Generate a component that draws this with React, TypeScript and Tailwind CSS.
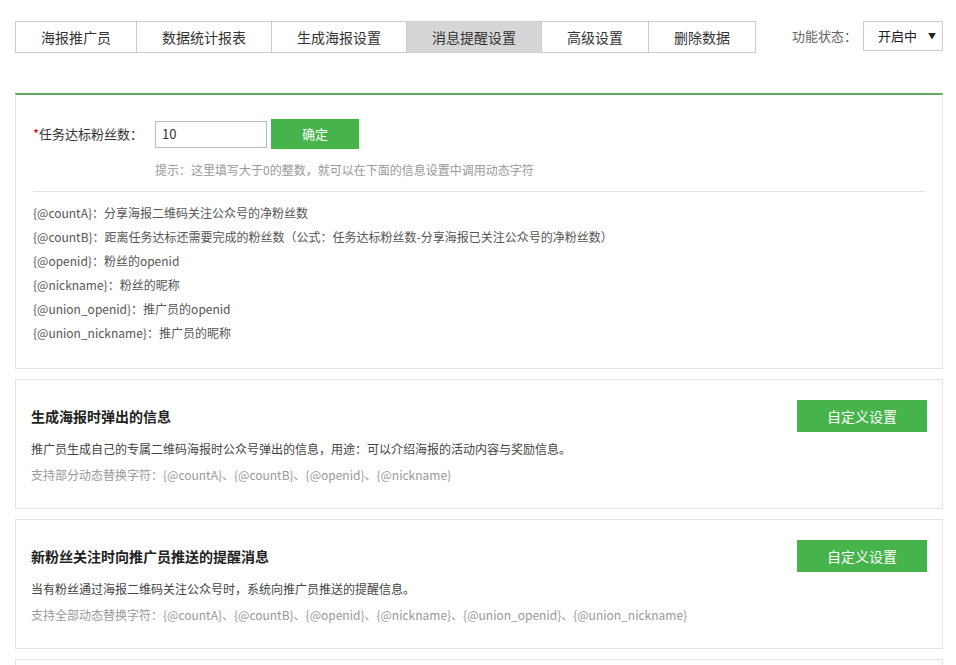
import React from "react";

const tabs = ["海报推广员", "数据统计报表", "生成海报设置", "消息提醒设置", "高级设置", "删除数据"];

const vars = [
  ["{@countA}", "分享海报二维码关注公众号的净粉丝数"],
  ["{@countB}", "距离任务达标还需要完成的粉丝数（公式：任务达标粉丝数-分享海报已关注公众号的净粉丝数）"],
  ["{@openid}", "粉丝的openid"],
  ["{@nickname}", "粉丝的昵称"],
  ["{@union_openid}", "推广员的openid"],
  ["{@union_nickname}", "推广员的昵称"],
];

const cards = [
  {
    title: "生成海报时弹出的信息",
    desc: "推广员生成自己的专属二维码海报时公众号弹出的信息，用途：可以介绍海报的活动内容与奖励信息。",
    support: "支持部分动态替换字符：{@countA}、{@countB}、{@openid}、{@nickname}",
  },
  {
    title: "新粉丝关注时向推广员推送的提醒消息",
    desc: "当有粉丝通过海报二维码关注公众号时，系统向推广员推送的提醒信息。",
    support:
      "支持全部动态替换字符：{@countA}、{@countB}、{@openid}、{@nickname}、{@union_openid}、{@union_nickname}",
  },
  {
    title: "推广员任务达标时推送的提醒消息",
    desc: "当推广员分享的海报关注人数达到任务目标时，系统向推广员推送的提醒信息。",
    support:
      "支持全部动态替换字符：{@countA}、{@countB}、{@openid}、{@nickname}、{@union_openid}、{@union_nickname}",
  },
];

export default function App() {
  return (
    <div className="min-h-[665px] bg-white font-['Noto_Sans_CJK_SC','Noto_Sans',sans-serif] text-[#333]">
      <div className="ml-[15px] w-[928px] pt-[21px]">
        {/* top bar */}
        <div className="flex items-start justify-between">
          <div className="flex h-[32px] border-y border-[#cccccc]">
            {tabs.map((t, i) => (
              <div
                key={t}
                className={
                  "flex items-center border-l border-[#cccccc] px-[25px] text-[14px] leading-none " +
                  (i === tabs.length - 1 ? "border-r " : "") +
                  (i === 3 ? "bg-[#d6d6d6]" : "bg-white")
                }
              >
                {t}
              </div>
            ))}
          </div>
          <div className="flex items-center">
            <span className="mr-[6px] text-[13px] text-[#666]">功能状态：</span>
            <div className="flex h-[30px] w-[80px] items-center justify-between border border-[#cccccc] pl-[14px] pr-[6px] text-[13px] text-[#222]">
              <span>开启中</span>
              <span className="text-[8px]">▼</span>
            </div>
          </div>
        </div>

        {/* panel 1 */}
        <div className="mt-[40px] border-x border-b border-t-2 border-[#e3e3e3] border-t-[#5faa5f] px-[17px] pb-[23px] pt-[24px]">
          <div className="flex h-[30px] items-center">
            <span className="w-[122px] text-[13px] text-[#333]">
              <span className="text-[#c00]">*</span>任务达标粉丝数：
            </span>
            <div className="flex h-[27px] w-[112px] items-center border border-[#bbbbbb] px-[6px] text-[13px] text-[#333]">
              10
            </div>
            <button className="ml-[4px] h-[30px] w-[88px] bg-[#47b34b] text-[13px] text-white">确定</button>
          </div>
          <div className="ml-[122px] mt-[11px] text-[12px] leading-[20px] text-[#999]">
            提示：这里填写大于0的整数，就可以在下面的信息设置中调用动态字符
          </div>
          <div className="mt-[11px] border-t border-[#e3e3e3]" />
          <div className="mt-[9px]">
            {vars.map(([k, v]) => (
              <div key={k} className="text-[12px] leading-[24px] text-[#555]">
                {k}：{v}
              </div>
            ))}
          </div>
        </div>

        {/* cards */}
        {cards.map((c) => (
          <div key={c.title} className="mt-[10px] border border-[#e3e3e3] px-[15px] pb-[20px] pt-[20px]">
            <div className="flex h-[32px] items-center justify-between">
              <span className="text-[14px] font-bold text-[#222]">{c.title}</span>
              <button className="h-[32px] w-[130px] bg-[#47b34b] text-[14px] text-white">自定义设置</button>
            </div>
            <div className="mt-[4px] text-[12px] leading-[26px] text-[#444]">{c.desc}</div>
            <div className="text-[12px] leading-[26px] text-[#999]">{c.support}</div>
          </div>
        ))}
        <div className="h-[20px]" />
      </div>
    </div>
  );
}
